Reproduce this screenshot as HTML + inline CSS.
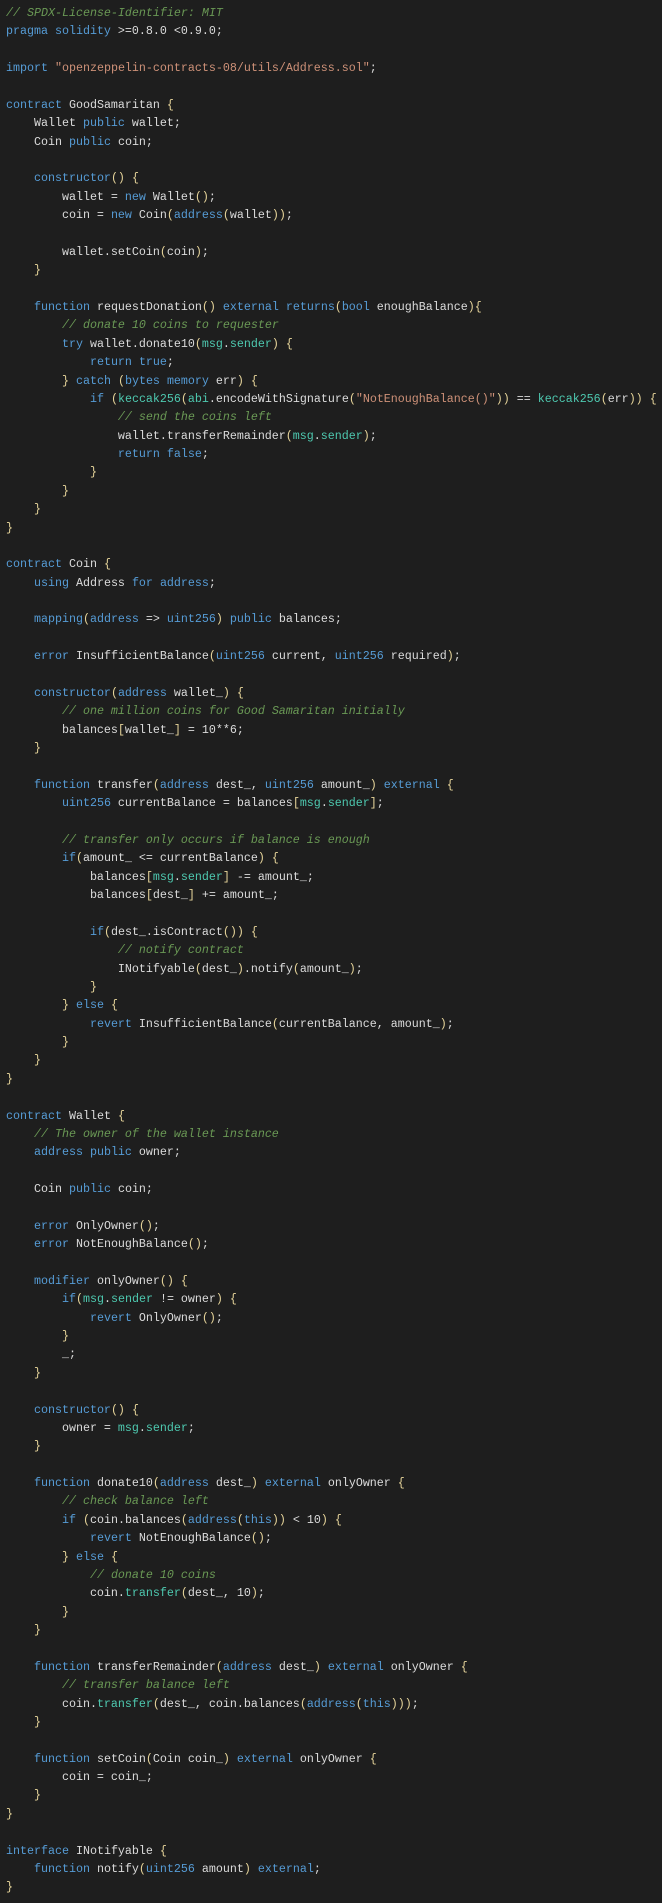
<!DOCTYPE html>
<html><head><meta charset="utf-8"><style>
html,body{margin:0;padding:0;background:#1e1e1e;width:662px;height:1903px;overflow:hidden}
pre{margin:0;padding:4px 0 0 6px;font-family:"Liberation Mono",monospace;font-size:11.67px;line-height:18.38px;color:#dcdcdc}
.k{color:#569cd6}.c{color:#6a9955;font-style:italic}.s{color:#ce9178}.t{color:#4ec9b0}.b{color:#e6d49a}
</style></head><body><pre><span class="c">// SPDX-License-Identifier: MIT</span>
<span class="k">pragma solidity</span> &gt;=0.8.0 &lt;0.9.0;

<span class="k">import</span> <span class="s">"openzeppelin-contracts-08/utils/Address.sol"</span>;

<span class="k">contract</span> GoodSamaritan <span class="b">{</span>
    Wallet <span class="k">public</span> wallet;
    Coin <span class="k">public</span> coin;

    <span class="k">constructor</span><span class="b">()</span> <span class="b">{</span>
        wallet = <span class="k">new</span> Wallet<span class="b">()</span>;
        coin = <span class="k">new</span> Coin<span class="b">(</span><span class="k">address</span><span class="b">(</span>wallet<span class="b">))</span>;

        wallet.setCoin<span class="b">(</span>coin<span class="b">)</span>;
    <span class="b">}</span>

    <span class="k">function</span> requestDonation<span class="b">()</span> <span class="k">external</span> <span class="k">returns</span><span class="b">(</span><span class="k">bool</span> enoughBalance<span class="b">){</span>
        <span class="c">// donate 10 coins to requester</span>
        <span class="k">try</span> wallet.donate10<span class="b">(</span><span class="t">msg</span>.<span class="t">sender</span><span class="b">)</span> <span class="b">{</span>
            <span class="k">return</span> <span class="k">true</span>;
        <span class="b">}</span> <span class="k">catch</span> <span class="b">(</span><span class="k">bytes</span> <span class="k">memory</span> err<span class="b">)</span> <span class="b">{</span>
            <span class="k">if</span> <span class="b">(</span><span class="t">keccak256</span><span class="b">(</span><span class="t">abi</span>.encodeWithSignature<span class="b">(</span><span class="s">"NotEnoughBalance()"</span><span class="b">))</span> == <span class="t">keccak256</span><span class="b">(</span>err<span class="b">))</span> <span class="b">{</span>
                <span class="c">// send the coins left</span>
                wallet.transferRemainder<span class="b">(</span><span class="t">msg</span>.<span class="t">sender</span><span class="b">)</span>;
                <span class="k">return</span> <span class="k">false</span>;
            <span class="b">}</span>
        <span class="b">}</span>
    <span class="b">}</span>
<span class="b">}</span>

<span class="k">contract</span> Coin <span class="b">{</span>
    <span class="k">using</span> Address <span class="k">for</span> <span class="k">address</span>;

    <span class="k">mapping</span><span class="b">(</span><span class="k">address</span> =&gt; <span class="k">uint256</span><span class="b">)</span> <span class="k">public</span> balances;

    <span class="k">error</span> InsufficientBalance<span class="b">(</span><span class="k">uint256</span> current, <span class="k">uint256</span> required<span class="b">)</span>;

    <span class="k">constructor</span><span class="b">(</span><span class="k">address</span> wallet_<span class="b">)</span> <span class="b">{</span>
        <span class="c">// one million coins for Good Samaritan initially</span>
        balances<span class="b">[</span>wallet_<span class="b">]</span> = 10**6;
    <span class="b">}</span>

    <span class="k">function</span> transfer<span class="b">(</span><span class="k">address</span> dest_, <span class="k">uint256</span> amount_<span class="b">)</span> <span class="k">external</span> <span class="b">{</span>
        <span class="k">uint256</span> currentBalance = balances<span class="b">[</span><span class="t">msg</span>.<span class="t">sender</span><span class="b">]</span>;

        <span class="c">// transfer only occurs if balance is enough</span>
        <span class="k">if</span><span class="b">(</span>amount_ &lt;= currentBalance<span class="b">)</span> <span class="b">{</span>
            balances<span class="b">[</span><span class="t">msg</span>.<span class="t">sender</span><span class="b">]</span> -= amount_;
            balances<span class="b">[</span>dest_<span class="b">]</span> += amount_;

            <span class="k">if</span><span class="b">(</span>dest_.isContract<span class="b">())</span> <span class="b">{</span>
                <span class="c">// notify contract</span>
                INotifyable<span class="b">(</span>dest_<span class="b">)</span>.notify<span class="b">(</span>amount_<span class="b">)</span>;
            <span class="b">}</span>
        <span class="b">}</span> <span class="k">else</span> <span class="b">{</span>
            <span class="k">revert</span> InsufficientBalance<span class="b">(</span>currentBalance, amount_<span class="b">)</span>;
        <span class="b">}</span>
    <span class="b">}</span>
<span class="b">}</span>

<span class="k">contract</span> Wallet <span class="b">{</span>
    <span class="c">// The owner of the wallet instance</span>
    <span class="k">address</span> <span class="k">public</span> owner;

    Coin <span class="k">public</span> coin;

    <span class="k">error</span> OnlyOwner<span class="b">()</span>;
    <span class="k">error</span> NotEnoughBalance<span class="b">()</span>;

    <span class="k">modifier</span> onlyOwner<span class="b">()</span> <span class="b">{</span>
        <span class="k">if</span><span class="b">(</span><span class="t">msg</span>.<span class="t">sender</span> != owner<span class="b">)</span> <span class="b">{</span>
            <span class="k">revert</span> OnlyOwner<span class="b">()</span>;
        <span class="b">}</span>
        _;
    <span class="b">}</span>

    <span class="k">constructor</span><span class="b">()</span> <span class="b">{</span>
        owner = <span class="t">msg</span>.<span class="t">sender</span>;
    <span class="b">}</span>

    <span class="k">function</span> donate10<span class="b">(</span><span class="k">address</span> dest_<span class="b">)</span> <span class="k">external</span> onlyOwner <span class="b">{</span>
        <span class="c">// check balance left</span>
        <span class="k">if</span> <span class="b">(</span>coin.balances<span class="b">(</span><span class="k">address</span><span class="b">(</span><span class="k">this</span><span class="b">))</span> &lt; 10<span class="b">)</span> <span class="b">{</span>
            <span class="k">revert</span> NotEnoughBalance<span class="b">()</span>;
        <span class="b">}</span> <span class="k">else</span> <span class="b">{</span>
            <span class="c">// donate 10 coins</span>
            coin.<span class="t">transfer</span><span class="b">(</span>dest_, 10<span class="b">)</span>;
        <span class="b">}</span>
    <span class="b">}</span>

    <span class="k">function</span> transferRemainder<span class="b">(</span><span class="k">address</span> dest_<span class="b">)</span> <span class="k">external</span> onlyOwner <span class="b">{</span>
        <span class="c">// transfer balance left</span>
        coin.<span class="t">transfer</span><span class="b">(</span>dest_, coin.balances<span class="b">(</span><span class="k">address</span><span class="b">(</span><span class="k">this</span><span class="b">)))</span>;
    <span class="b">}</span>

    <span class="k">function</span> setCoin<span class="b">(</span>Coin coin_<span class="b">)</span> <span class="k">external</span> onlyOwner <span class="b">{</span>
        coin = coin_;
    <span class="b">}</span>
<span class="b">}</span>

<span class="k">interface</span> INotifyable <span class="b">{</span>
    <span class="k">function</span> notify<span class="b">(</span><span class="k">uint256</span> amount<span class="b">)</span> <span class="k">external</span>;
<span class="b">}</span>
</pre></body></html>
